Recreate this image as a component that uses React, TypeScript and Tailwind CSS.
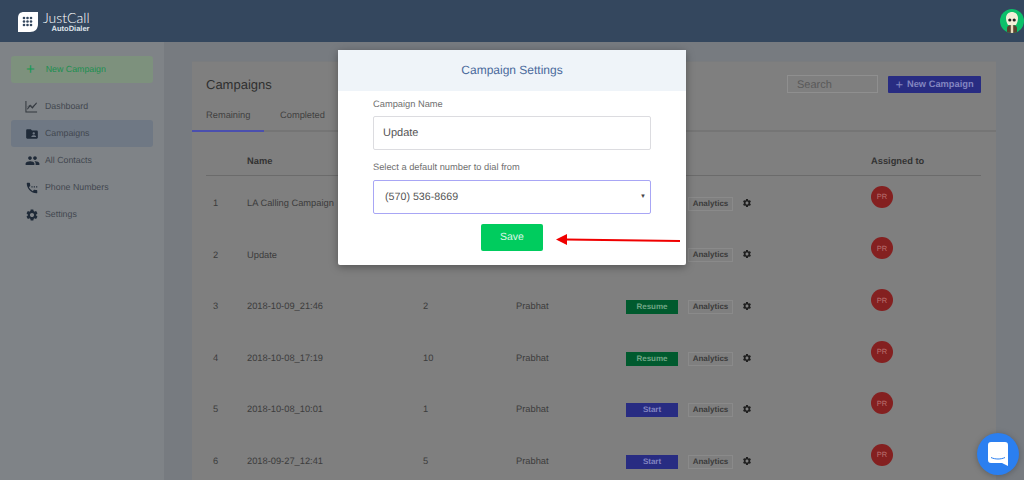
import { MdFolderShared, MdPeople, MdSettingsPhone, MdSettings } from "react-icons/md";

const rows = [
  { n: 1, name: "LA Calling Campaign", count: "", by: "", status: "" },
  { n: 2, name: "Update", count: "", by: "", status: "" },
  { n: 3, name: "2018-10-09_21:46", count: "2", by: "Prabhat", status: "Resume" },
  { n: 4, name: "2018-10-08_17:19", count: "10", by: "Prabhat", status: "Resume" },
  { n: 5, name: "2018-10-08_10:01", count: "1", by: "Prabhat", status: "Start" },
  { n: 6, name: "2018-09-27_12:41", count: "5", by: "Prabhat", status: "Start" },
];

function ChartIcon() {
  return (
    <svg width="13" height="13" viewBox="0 0 14 14" fill="none" stroke="#33383f" strokeWidth="1.1">
      <path d="M1 1v12h12" />
      <path d="M2.5 10l3-4 2.5 2.5L12.5 3" />
      <path d="M2.5 7.5l3-2 2.5 1.5 4.5-3" strokeWidth="0.6" />
    </svg>
  );
}

function NavItem({ icon, label, active }: { icon: React.ReactNode; label: string; active?: boolean }) {
  return (
    <div className={`flex h-[27px] items-center rounded-[3px] pl-[14px] ${active ? "bg-[#6f7884]" : ""}`}>
      <span className="flex w-[20px] items-center">{icon}</span>
      <span className="text-[8.8px] text-[#42474f]">{label}</span>
    </div>
  );
}

function Row({ r }: { r: (typeof rows)[number] }) {
  return (
    <div className="grid h-[51.67px] grid-cols-[41px_176px_93px_110px_62px_183px_1fr] items-center text-[9.3px] text-[#3c3c3c]">
      <span className="pl-[7px]">{r.n}</span>
      <span>{r.name}</span>
      <span>{r.count}</span>
      <span>{r.by}</span>
      <span>
        {r.status && (
          <span
            className={`flex h-[14px] w-[52px] items-center justify-center text-[8px] font-bold ${
              r.status === "Resume" ? "bg-[#005a2e] text-[#6fa585]" : "bg-[#282c82] text-[#8285c0]"
            }`}
          >
            {r.status}
          </span>
        )}
      </span>
      <span className="flex items-center gap-[9px]">
        <span className="flex h-[14px] w-[45px] items-center justify-center border border-[#8a8a8a] text-[8px] font-bold text-[#3a3a3a]">
          Analytics
        </span>
        <MdSettings className="-mt-[2px] text-[#1f1f1f]" size={10} />
      </span>
      <span className="-mt-[14px] flex h-[22px] w-[22px] items-center justify-center rounded-full bg-[#842020] text-[7.5px] text-[#bb7272]">
        PR
      </span>
    </div>
  );
}

export default function App() {
  return (
    <div className="relative flex h-[480px] w-[1024px] flex-col overflow-hidden bg-[#777b80] font-['Liberation_Sans',sans-serif] [text-rendering:geometricPrecision]">
      <header className="flex h-[42px] shrink-0 items-center justify-between bg-[#34475e]">
        <div className="flex items-center pl-[18px]">
          <svg width="20" height="20" viewBox="0 0 20 20" className="mt-[1px]">
            <path d="M6 0h14v12c0 5-3 8-8 8H0V6c0-4 2-6 6-6z" fill="#fff" />
            {[5.5, 9, 12.5].map((x) =>
              [6, 9.5, 13].map((y) => <circle key={`${x}-${y}`} cx={x + 0.5} cy={y} r="1.3" fill="#34475e" />)
            )}
          </svg>
          <div className="ml-[5px] flex flex-col items-end pr-[1px] leading-none text-white">
            <span className="font-['Lato',sans-serif] text-[14px] font-light leading-[15px]">JustCall</span>
            <span className="text-[7.5px] font-bold leading-[8px] text-[#dfe4ea]">AutoDialer</span>
          </div>
        </div>
        <svg width="24" height="24" viewBox="0 0 24 24" className="-mt-[1px]">
          <defs>
            <clipPath id="av">
              <circle cx="12" cy="12" r="12" />
            </clipPath>
          </defs>
          <g clipPath="url(#av)">
            <rect width="24" height="24" fill="#0cc06a" />
            <path d="M7 24v-5c0-2 2-3 5-3s5 1 5 3v5z" fill="#5a4330" />
            <rect x="10.8" y="16" width="2.4" height="8" fill="#e9dcc0" />
            <path d="M6 9c0-4 3-6 6-6s6 2 6 6c0 3-1 5-2 7H8c-1-2-2-4-2-7z" fill="#f3efd8" />
            <circle cx="9.8" cy="11" r="1.6" fill="#222" />
            <circle cx="14.2" cy="11" r="1.6" fill="#222" />
          </g>
        </svg>
      </header>

      <div className="flex min-h-0 flex-1">
        <aside className="w-[164px] shrink-0 bg-[#7f8387] px-[11px] pt-[14px]">
          <div className="flex h-[27px] items-center rounded-[3px] bg-[#7d917d] pl-[15px]">
            <span className="mr-[11px] text-[15px] font-light leading-none text-[#159a52]">+</span>
            <span className="pt-[1px] text-[8.8px] text-[#1b8f50]">New Campaign</span>
          </div>
          <div className="mt-[10px] flex flex-col">
            <NavItem icon={<ChartIcon />} label="Dashboard" />
            <NavItem active icon={<MdFolderShared size={14} className="text-[#1f2a38]" />} label="Campaigns" />
            <NavItem icon={<MdPeople size={15} className="text-[#1f2a38]" />} label="All Contacts" />
            <NavItem icon={<MdSettingsPhone size={14} className="text-[#1f2a38]" />} label="Phone Numbers" />
            <NavItem icon={<MdSettings size={14} className="text-[#1f2a38]" />} label="Settings" />
          </div>
        </aside>

        <main className="min-w-0 flex-1 pl-[28px] pr-[28px] pt-[19px]">
          <section className="h-[500px] border-t border-[#7a7c7e] bg-[#7f7f7f]">
            <div className="flex h-[31px] items-start justify-between pl-[14px] pr-[15px] pt-[13px]">
              <h1 className="text-[13px] leading-[20px] text-[#2f2f2f]">Campaigns</h1>
              <div className="flex items-center gap-[10px]">
                <div className="flex h-[18px] w-[91px] items-center border border-[#8f8f8f] pl-[9px] pt-[2px] text-[11px] text-[#5a5a5a]">
                  Search
                </div>
                <div className="flex h-[17px] w-[93px] items-center justify-center rounded-[1px] bg-[#282c82] pt-[1px] text-[9.3px] font-bold text-[#8285c0]">
                  <span className="mr-[4px] text-[13px] font-light leading-none">+</span>New Campaign
                </div>
              </div>
            </div>
            <div className="mt-[14px] flex h-[25px] items-start border-b-2 border-[#757575] text-[9.3px] text-[#3f3f3f]">
              <div className="h-[25px] w-[72px] border-b-2 border-[#4a4fae] pl-[14px] pt-[2px]">Remaining</div>
              <div className="pl-[16px] pt-[2px]">Completed</div>
            </div>
            <div className="pl-[14px] pr-[15px]">
              <div className="mt-[22px] grid h-[22px] grid-cols-[41px_624px_1fr] items-start border-b border-[#6b6b6b] pt-[1px] text-[9.3px] font-bold text-[#333]">
                <span />
                <span>Name</span>
                <span>Assigned to</span>
              </div>
              <div className="pt-[2px]">
                {rows.map((r) => (
                  <Row key={r.n} r={r} />
                ))}
              </div>
            </div>
          </section>
        </main>
      </div>

      <div className="absolute left-[338px] top-[50px] flex h-[215px] w-[348px] flex-col rounded-[2px] bg-white shadow-[0_2px_8px_rgba(0,0,0,0.35)]">
        <div className="flex h-[41px] items-center justify-center bg-[#eff4f9] pb-[1px] text-[12px] text-[#4a6a9c]">Campaign Settings</div>
        <div className="flex flex-1 flex-col px-[35px]">
          <label className="mt-[7px] text-[9.3px] leading-[13px] text-[#6f6f6f]">Campaign Name</label>
          <div className="mt-[5px] flex h-[34px] items-center rounded-[2px] border border-[#dcdce0] pl-[9px] pt-[1px] text-[11px] text-[#555]">Update</div>
          <label className="mt-[11px] text-[9.3px] leading-[13px] text-[#6f6f6f]">Select a default number to dial from</label>
          <div className="mt-[6px] flex h-[34px] items-center justify-between rounded-[2px] border border-[#a8a6f5] pl-[11px] pr-[4px] pt-[1px] text-[10.7px] text-[#555]">
            <span>(570) 536-8669</span>
            <span className="text-[6px] text-[#444]">▼</span>
          </div>
          <div className="mt-[10px] flex h-[27px] w-[62px] items-center justify-center self-center rounded-[2px] bg-[#00cc5e] pt-[1px] text-[10.5px] text-[#d8f7e6]">Save</div>
        </div>
        <svg width="128" height="14" viewBox="0 0 128 14" className="absolute left-[216px] top-[183px]">
          <path d="M126 8 L12 6.5" stroke="#f00000" strokeWidth="2" fill="none" />
          <path d="M2 6.5 L13 1 L13 12 Z" fill="#f00000" />
        </svg>
      </div>

      <div className="absolute left-[977px] top-[433px] flex h-[42px] w-[42px] items-center justify-center rounded-full bg-[#2b7ff0] shadow-[0_1px_6px_rgba(0,0,0,0.25)]">
        <svg width="20" height="24" viewBox="0 0 20 24">
          <path d="M3 0h14a3 3 0 0 1 3 3v21l-6-3H3a3 3 0 0 1-3-3V3a3 3 0 0 1 3-3z" fill="#fff" />
          <path d="M3 15.5c4 2 10 2 14 0" stroke="#2b7ff0" strokeWidth="1" fill="none" />
        </svg>
      </div>
    </div>
  );
}
